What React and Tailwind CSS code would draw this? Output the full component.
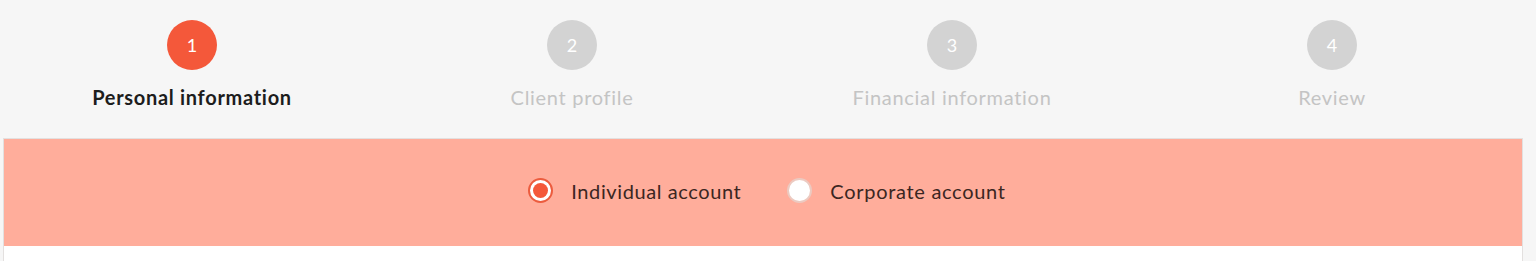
import { useState } from "react";

const steps = ["Personal information", "Client profile", "Financial information", "Review"];

function Radio({ checked }) {
    if (checked) {
        return (
            <span className="flex h-[25px] w-[25px] items-center justify-center rounded-full border-2 border-[#ec5c3e] bg-white">
                <span className="h-[15px] w-[15px] rounded-full bg-[#f4583a]" />
            </span>
        );
    }
    return <span className="h-[25px] w-[25px] rounded-full border-2 border-[#eccac1] bg-white" />;
}

function App() {
    const [account, setAccount] = useState("individual");
    const current = 0;

    return (
        <div className="min-h-[261px] w-full bg-[#f6f6f6]" style={{ fontFamily: "Lato, 'Noto Sans', sans-serif" }}>
            <div className="ml-[2px] w-[1521px]">
                <div className="grid grid-cols-4 pt-5 pb-[29px] pr-px">
                    {steps.map((s, i) => (
                        <div key={s} className="flex flex-col items-center">
                            <div className={`flex h-[50px] w-[50px] items-center justify-center rounded-full text-[18px] text-white ${i === current ? "bg-[#f4583a]" : "bg-[#d3d3d3]"}`}>
                                {i + 1}
                            </div>
                            <div className={`mt-[15px] text-[20px] leading-[24px] tracking-[0.035em] ${i === current ? "font-bold text-[#1d1d1d]" : "text-[#c4c4c4]"}`}>
                                {s}
                            </div>
                        </div>
                    ))}
                </div>
                <div className="ml-px border border-[#e3e0df] bg-white min-h-[130px]">
                    <div className="flex h-[107px] items-center justify-center gap-[46px] bg-[#ffad9b] pb-1 pl-[8px]">
                        <label className="flex cursor-pointer items-center gap-[18px]" onClick={() => setAccount("individual")}>
                            <Radio checked={account === "individual"} />
                            <span className="text-[20px] tracking-[0.03em] text-[#3b2622]">Individual account</span>
                        </label>
                        <label className="flex cursor-pointer items-center gap-[18px]" onClick={() => setAccount("corporate")}>
                            <Radio checked={account === "corporate"} />
                            <span className="text-[20px] tracking-[0.035em] text-[#3b2622]">Corporate account</span>
                        </label>
                    </div>
                </div>
            </div>
        </div>
    );
}

export default App;
